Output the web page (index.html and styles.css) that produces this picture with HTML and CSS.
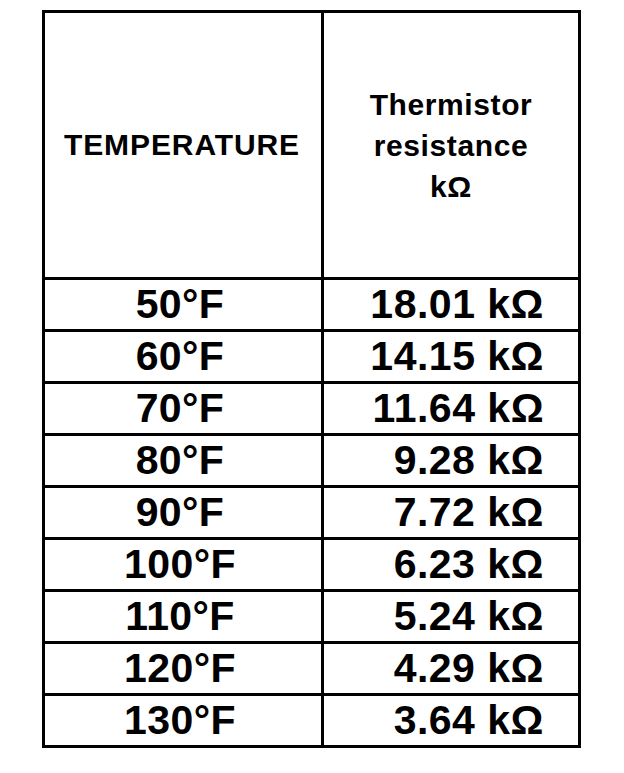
FILE: index.html
```html
<!DOCTYPE html>
<html>
<head>
<meta charset="utf-8">
<link rel="stylesheet" href="styles.css">
</head>
<body>
<div class="table">
  <div class="cell head temp">TEMPERATURE</div>
  <div class="cell head res">Thermistor<br>resistance<br>kΩ</div>
  <div class="cell t">50°F</div><div class="cell r">18.01 kΩ</div>
  <div class="cell t">60°F</div><div class="cell r">14.15 kΩ</div>
  <div class="cell t">70°F</div><div class="cell r">11.64 kΩ</div>
  <div class="cell t">80°F</div><div class="cell r">9.28 kΩ</div>
  <div class="cell t">90°F</div><div class="cell r">7.72 kΩ</div>
  <div class="cell t">100°F</div><div class="cell r">6.23 kΩ</div>
  <div class="cell t">110°F</div><div class="cell r">5.24 kΩ</div>
  <div class="cell t">120°F</div><div class="cell r">4.29 kΩ</div>
  <div class="cell t">130°F</div><div class="cell r">3.64 kΩ</div>
</div>
</body>
</html>
```
FILE: styles.css
```css
html, body {
  margin: 0;
  padding: 0;
  background: #fff;
}
body {
  padding: 10px 0 0 42px;
  font-family: "Liberation Sans", Arial, sans-serif;
  font-weight: bold;
  color: #000;
}
.table {
  display: grid;
  grid-template-columns: 276px 254px;
  grid-template-rows: 264px repeat(9, 49px);
  gap: 3px;
  padding: 3px;
  background: #000;
  width: max-content;
}
.cell {
  background: #fff;
  display: flex;
  align-items: center;
}
.head {
  justify-content: center;
  text-align: center;
}
.temp {
  font-size: 30px;
  letter-spacing: 0.9px;
  padding-right: 2px;
}
.res {
  font-size: 30px;
  line-height: 41px;
  letter-spacing: 0.6px;
  padding-top: 0;
}
.t {
  justify-content: center;
  font-size: 41px;
  letter-spacing: 0.4px;
  padding-right: 6px;
}
.r {
  justify-content: flex-end;
  padding-right: 34px;
  font-size: 41px;
  letter-spacing: 0.5px;
}
```
